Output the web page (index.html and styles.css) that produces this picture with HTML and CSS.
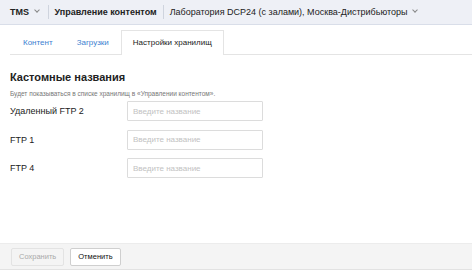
FILE: index.html
```html
<!DOCTYPE html>
<html lang="ru">
<head>
<meta charset="UTF-8">
<title>Настройки хранилищ</title>
<link rel="stylesheet" href="styles.css">
</head>
<body>

<div class="header">
    <span class="crumb bold">TMS <span class="chev"></span></span>
    <span class="sep"></span>
    <span class="crumb bold">Управление контентом</span>
    <span class="sep"></span>
    <span class="crumb">Лаборатория DCP24 (с залами), Москва-Дистрибьюторы <span class="chev"></span></span>
</div>

<div class="tabs">
    <div class="tab">Контент</div>
    <div class="tab">Загрузки</div>
    <div class="tab active">Настройки хранилищ</div>
</div>

<div class="content">
    <h2>Кастомные названия</h2>
    <p class="hint">Будет показываться в списке хранилищ в «Управлении контентом».</p>
    <div class="row">
        <label>Удаленный FTP 2</label>
        <input type="text" placeholder="Введите название">
    </div>
    <div class="row">
        <label>FTP 1</label>
        <input type="text" placeholder="Введите название">
    </div>
    <div class="row">
        <label>FTP 4</label>
        <input type="text" placeholder="Введите название">
    </div>
</div>

<div class="footer">
    <button class="btn" disabled>Сохранить</button>
    <button class="btn">Отменить</button>
</div>

</body>
</html>
```

FILE: styles.css
```css
body {
    margin: 0;
    font-family: "Liberation Sans", Arial, sans-serif;
    color: #222;
    background-color: #fff;
    width: 472px;
    height: 276px;
    display: flex;
    flex-direction: column;
    overflow: hidden;
}
.header {
    height: 25px;
    flex-shrink: 0;
    background-color: #eef0f6;
    border-bottom: 1px solid #d9dee9;
    display: flex;
    align-items: center;
    padding-left: 10px;
    font-size: 9px;
    box-sizing: border-box;
}
.crumb {
    white-space: nowrap;
}
.bold {
    font-weight: bold;
}
.chev {
    display: inline-block;
    width: 3px;
    height: 3px;
    border-right: 1px solid #888;
    border-bottom: 1px solid #888;
    transform: rotate(45deg);
    margin: 0 3px 3px 3px;
}
.sep {
    width: 1px;
    height: 14px;
    background-color: #cfd4de;
    margin: 0 6px;
}
.tabs {
    display: flex;
    flex-shrink: 0;
    margin: 5px 0 0 10px;
    border-bottom: 1px solid #e4e4e4;
    height: 25px;
    box-sizing: border-box;
}
.tab {
    font-size: 8px;
    color: #3d7fd1;
    padding: 0 11px;
    line-height: 24px;
    border: 1px solid transparent;
    border-bottom: none;
}
.tab:first-child {
    padding-left: 12px;
}
.tab.active {
    color: #222;
    background-color: #fff;
    border-color: #e4e4e4;
    margin-bottom: -1px;
}
.content {
    flex: 1;
    padding: 16px 10px 0;
}
.content h2 {
    font-size: 11px;
    margin: 0;
}
.hint {
    font-size: 6.5px;
    color: #777;
    margin: 7px 0 0;
}
.row {
    display: flex;
    align-items: center;
    height: 28.5px;
}
.row label {
    width: 117px;
    font-size: 9px;
}
.row input {
    width: 136px;
    height: 20px;
    box-sizing: border-box;
    border: 1px solid #dcdcdc;
    border-radius: 1px;
    padding: 0 5px;
    font-family: inherit;
    font-size: 8px;
}
.row input::placeholder {
    color: #c2c2c2;
}
.footer {
    height: 27px;
    flex-shrink: 0;
    box-sizing: border-box;
    margin-bottom: 6px;
    background-color: #f4f4f4;
    border-top: 1px solid #ececec;
    border-bottom: 1px solid #e2e2e2;
    display: flex;
    align-items: center;
    gap: 6px;
    padding-left: 11px;
}
.btn {
    font-family: inherit;
    font-size: 7.5px;
    height: 18px;
    padding: 0 7px;
    background-color: #fff;
    border: 1px solid #cfcfcf;
    border-radius: 2px;
    color: #111;
}
.btn:disabled {
    background-color: #f4f4f4;
    border-color: #e3e3e3;
    color: #aaa;
}
```
